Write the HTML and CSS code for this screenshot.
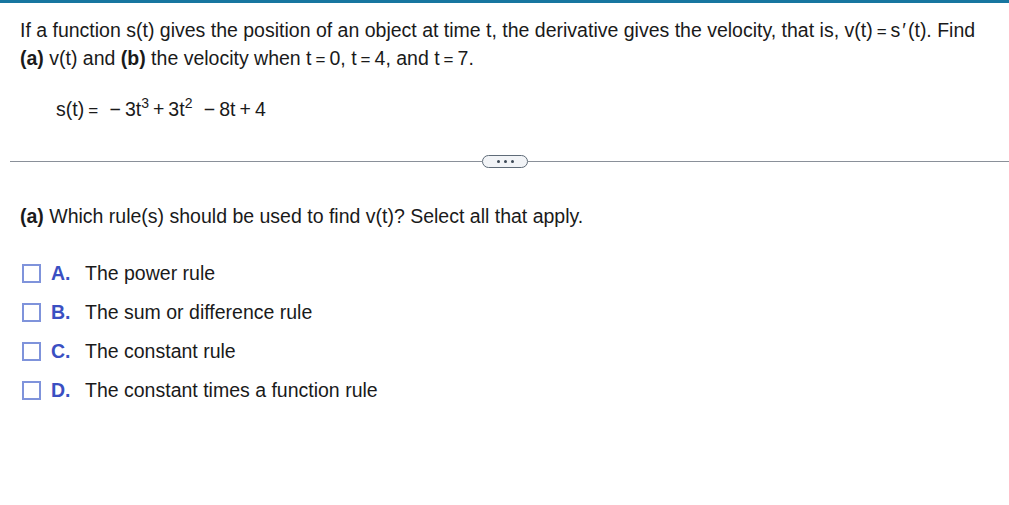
FILE: index.html
```html
<!DOCTYPE html>
<html>
<head>
<meta charset="utf-8">
<link rel="stylesheet" href="styles.css">
</head>
<body>
<div class="topbar"></div>
<div class="page">
  <div class="stem">
    <p class="intro">If a function s(t) gives the position of an object at time t, the derivative gives the velocity, that is, v(t)<span class="eq">=</span>s<span class="prime">′</span>(t). Find<br><b>(a)</b> v(t) and <b>(b)</b> the velocity when t<span class="eq">=</span>0, t<span class="eq">=</span>4, and t<span class="eq">=</span>7.</p>
    <p class="formula">s(t)<span class="eq">=</span> <span class="op">−</span>3t<sup>3</sup><span class="op">+</span>3t<sup>2</sup> <span class="op sp">−</span>8t<span class="op">+</span>4</p>
  </div>
  <div class="divider">
    <span class="line left"></span>
    <span class="more"><i></i><i></i><i></i></span>
    <span class="line"></span>
  </div>
  <p class="question"><b>(a)</b> Which rule(s) should be used to find v(t)? Select all that apply.</p>
  <ul class="options">
    <li><span class="box"></span><span class="letter">A.</span><span class="text">The power rule</span></li>
    <li><span class="box"></span><span class="letter">B.</span><span class="text">The sum or difference rule</span></li>
    <li><span class="box"></span><span class="letter">C.</span><span class="text">The constant rule</span></li>
    <li><span class="box"></span><span class="letter">D.</span><span class="text">The constant times a function rule</span></li>
  </ul>
</div>
</body>
</html>
```
FILE: styles.css
```css
html, body {
  margin: 0;
  padding: 0;
  background: #ffffff;
  overflow-x: hidden;
}
body {
  font-family: "Liberation Sans", Arial, sans-serif;
  color: #1a1a1a;
  font-size: 19.5px;
}
.topbar {
  height: 3px;
  background: #1776a0;
}
.stem {
  padding: 14px 20px 0 20px;
}
.intro {
  margin: 0;
  line-height: 27px;
  white-space: nowrap;
}
.eq {
  margin: 0 4px;
  font-size: 17px;
}
.prime {
  margin: 0 2px 0 2px;
}
.formula {
  margin: 23px 0 0 36px;
  line-height: 27px;
}
.formula .eq {
  margin: 0 2px 0 4px;
}
.formula sup {
  font-size: 14px;
  vertical-align: 8px;
  line-height: 0;
}
.op {
  margin: 0 4px;
}
.op.sp {
  margin-left: 6px;
}
.divider {
  display: flex;
  align-items: center;
  margin: 31px 0 0 10px;
}
.line {
  flex: 1;
  height: 1px;
  background: #8a9099;
}
.line.left {
  flex: 0 0 472px;
}
.more {
  width: 44px;
  height: 11px;
  border: 1px solid #5f6b78;
  border-radius: 7px;
  background: #f2f4f7;
  display: flex;
  align-items: center;
  justify-content: center;
  gap: 4px;
}
.more i {
  width: 3px;
  height: 3px;
  border-radius: 50%;
  background: #3e4a57;
}
.question {
  margin: 35px 0 0 20px;
  line-height: 27px;
}
.options {
  list-style: none;
  margin: 24px 0 0 0;
  padding: 0 0 0 22px;
}
.options li {
  display: flex;
  align-items: center;
  height: 39px;
}
.box {
  width: 15px;
  height: 15px;
  border: 2px solid #7f93db;
  background: #fff;
  flex: none;
}
.letter {
  color: #3a4fc2;
  font-weight: bold;
  margin-left: 10px;
  width: 34px;
}
.text {
  color: #1a1a1a;
}
```
